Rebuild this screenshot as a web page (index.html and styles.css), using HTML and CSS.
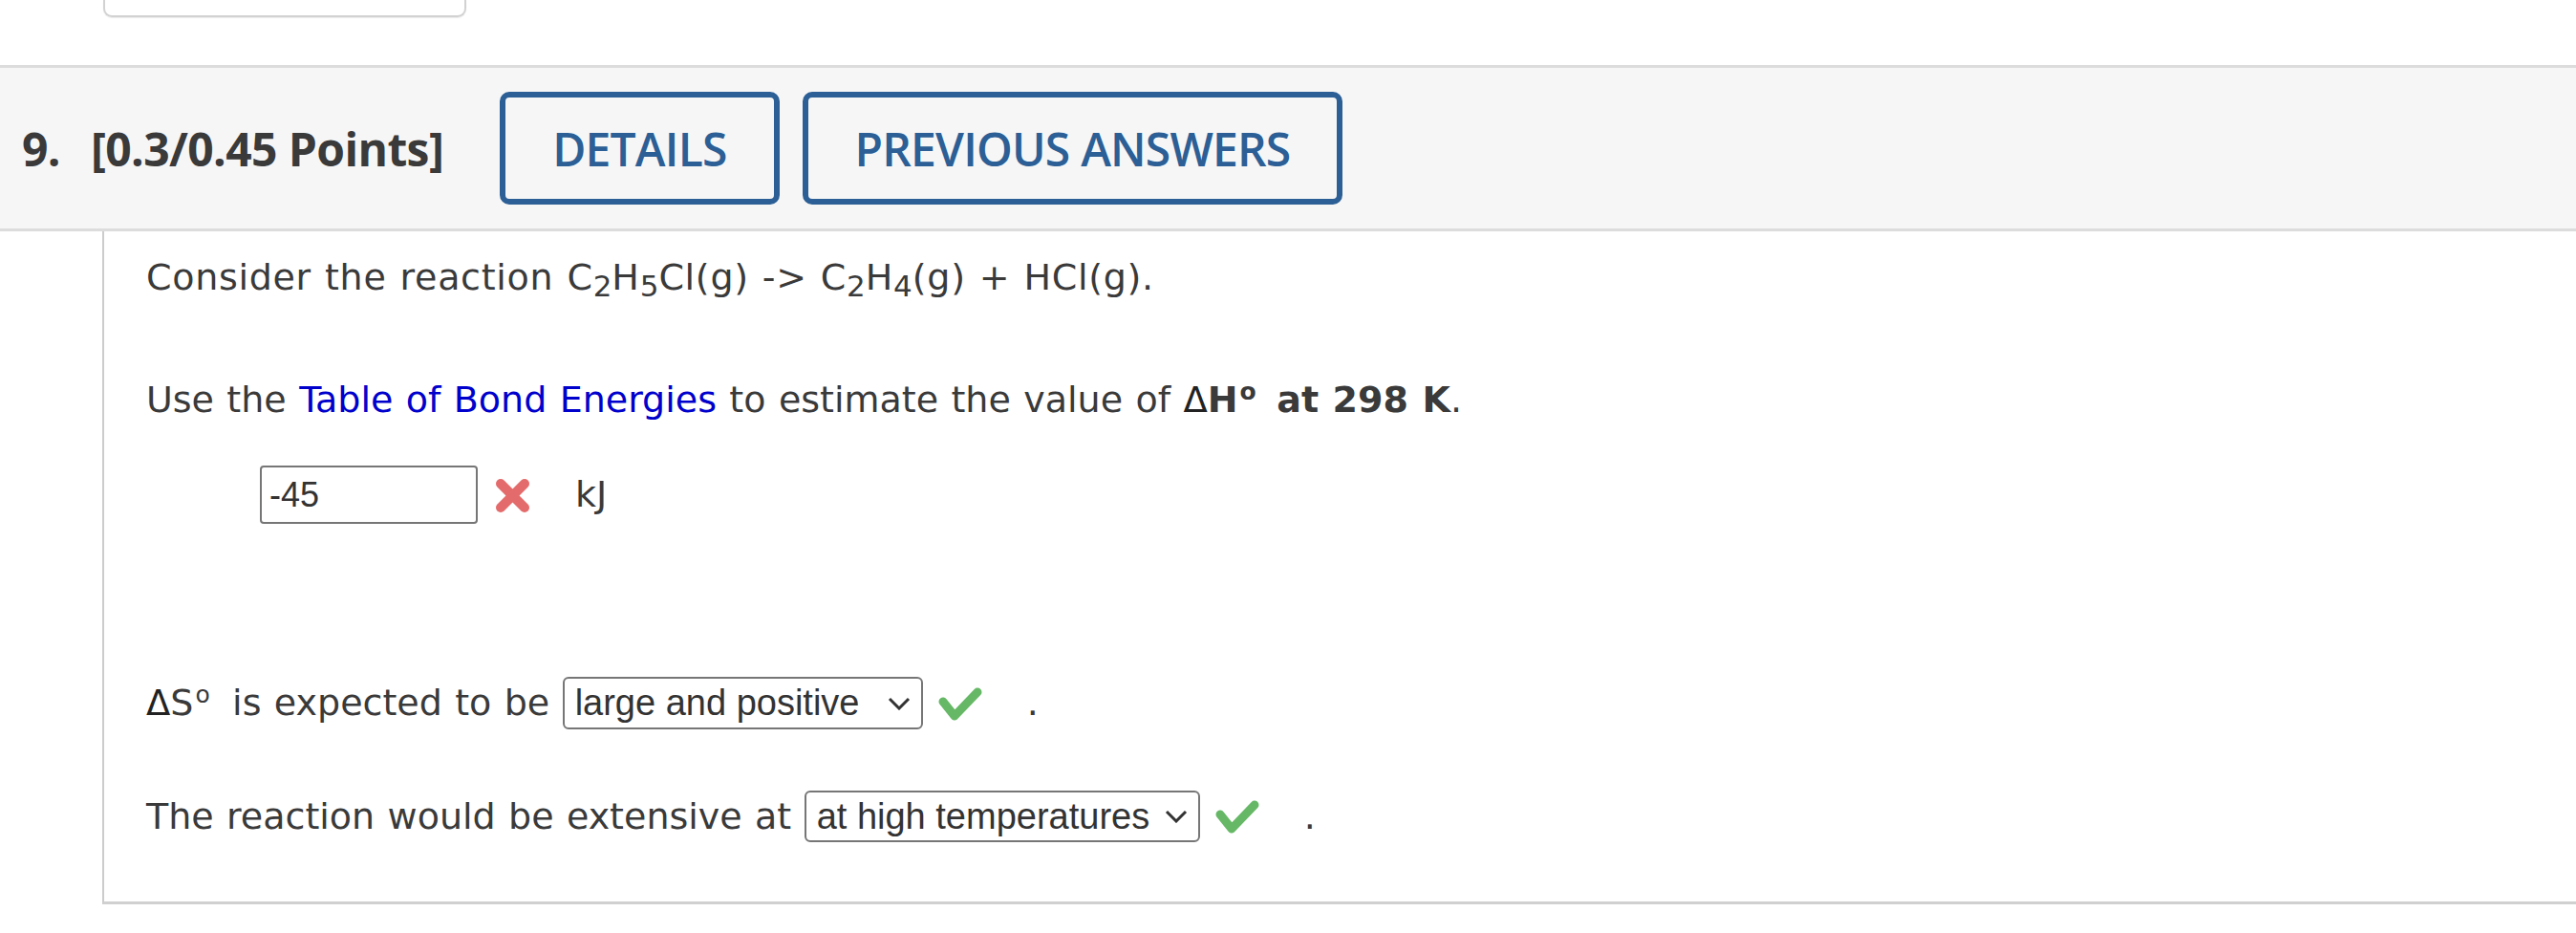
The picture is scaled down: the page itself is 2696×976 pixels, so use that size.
FILE: index.html
```html
<!DOCTYPE html>
<html>
<head>
<meta charset="utf-8">
<link rel="stylesheet" href="styles.css">
</head>
<body>
<div class="prev-card"></div>
<div class="q-header">
  <div class="q-title"><span class="q-num">9.</span><span>[0.3/0.45 Points]</span></div>
  <div class="q-btn">DETAILS</div>
  <div class="q-btn">PREVIOUS ANSWERS</div>
</div>
<div class="q-body">
  <div class="line l1">Consider the reaction C<sub>2</sub>H<sub>5</sub>Cl(g) -&gt; C<sub>2</sub>H<sub>4</sub>(g) + HCl(g).</div>
  <div class="line l2">Use the <a class="link">Table of Bond Energies</a> to estimate the value of <b><span class="delta">Δ</span>H<sup class="deg">o</sup> at 298 K</b>.</div>
  <div class="row r3">
    <span class="input">-45</span>
    <svg class="xicon" width="41" height="40" viewBox="0 0 41 40"><g stroke="#e25b5b" stroke-width="10" stroke-linecap="round" opacity="0.9"><line x1="8" y1="8" x2="33" y2="33"/><line x1="33" y1="8" x2="8" y2="33"/></g></svg>
    <span class="unit">kJ</span>
  </div>
  <div class="row r4">
    <span><span class="delta">Δ</span>S<sup class="deg">o</sup> is expected to be&nbsp;</span>
    <span class="select s1"><span>large and positive</span><svg class="chev" width="24" height="14" viewBox="0 0 24 14"><polyline points="2,2 12,12 22,2" fill="none" stroke="#333" stroke-width="3"/></svg></span>
    <svg class="check" width="48" height="36" viewBox="0 0 48 36"><polyline points="6,16 18,31 42,6" fill="none" stroke="#66b866" stroke-width="9" stroke-linecap="round" stroke-linejoin="round"/></svg>
    <span class="dot">.</span>
  </div>
  <div class="row r5">
    <span>The reaction would be extensive at&nbsp;</span>
    <span class="select s2"><span>at high temperatures</span><svg class="chev" width="24" height="14" viewBox="0 0 24 14"><polyline points="2,2 12,12 22,2" fill="none" stroke="#333" stroke-width="3"/></svg></span>
    <svg class="check" width="48" height="36" viewBox="0 0 48 36"><polyline points="6,16 18,31 42,6" fill="none" stroke="#66b866" stroke-width="9" stroke-linecap="round" stroke-linejoin="round"/></svg>
    <span class="dot">.</span>
  </div>
</div>
</body>
</html>
```
FILE: styles.css
```css
html, body {
  margin: 0;
  padding: 0;
  background: #ffffff;
}
body {
  width: 2696px;
  height: 976px;
  overflow: hidden;
  font-family: "DejaVu Sans", Verdana, sans-serif;
  color: #3a3a3a;
}
.prev-card {
  margin-left: 108px;
  width: 376px;
  height: 16px;
  border: 2px solid #d2d2d2;
  border-top: none;
  border-radius: 0 0 9px 9px;
  box-shadow: 0 1px 1px rgba(0,0,0,0.08);
}
.q-header {
  margin-top: 50px;
  height: 168px;
  background: #f6f6f6;
  border-top: 3px solid #dcdcdc;
  border-bottom: 3px solid #dcdcdc;
  display: flex;
  align-items: center;
  padding-left: 23px;
  gap: 25px;
  font-family: "Open Sans", sans-serif;
}
.q-title {
  font-weight: 700;
  font-size: 48px;
  color: #3a3a3a;
  display: flex;
  letter-spacing: -0.6px;
  margin-right: 34px;
}
.q-num {
  margin-right: 32px;
}
.q-btn {
  box-sizing: border-box;
  height: 118px;
  border: 6px solid #2c5f95;
  border-radius: 10px;
  display: flex;
  align-items: center;
  justify-content: center;
  padding: 0 49px;
  font-size: 48px;
  font-weight: 600;
  color: #2c5f95;
  letter-spacing: -0.8px;
}
.q-btn + .q-btn {
  margin-left: -1px;
}
.q-body {
  margin-left: 107px;
  border-left: 2px solid #cccccc;
  border-bottom: 3px solid #d0d0d0;
  padding: 27px 0 62px 44px;
  font-size: 38px;
  line-height: 43px;
  word-spacing: 1.3px;
}
.l1 {
  letter-spacing: 0.7px;
}
.line sub {
  font-size: 31px;
  vertical-align: -7px;
  line-height: 0;
  letter-spacing: 0;
}
.l2 {
  margin-top: 85px;
}
.link {
  color: #0000cc;
}
.delta {
  font-size: 37px;
  font-weight: 400;
  color: #222;
}
.deg {
  font-size: 25px;
  vertical-align: 13px;
  line-height: 0;
  margin: 0 7px 0 2px;
}
.r4 .deg {
  margin-right: 10px;
}
.row {
  display: flex;
  align-items: center;
}
.r3 {
  margin-top: 47px;
  height: 61px;
}
.r4 {
  margin-top: 160px;
  height: 55px;
}
.r5 {
  margin-top: 64px;
  height: 54px;
}
.input {
  box-sizing: border-box;
  margin-left: 119px;
  width: 228px;
  height: 61px;
  border: 2px solid #767676;
  border-radius: 4px;
  font-family: "Liberation Sans", Arial, sans-serif;
  font-size: 36px;
  word-spacing: 0;
  color: #333;
  display: flex;
  align-items: center;
  padding-left: 8px;
}
.xicon {
  margin-left: 16px;
  filter: blur(0.7px);
}
.unit {
  margin-left: 45px;
}
.select {
  box-sizing: border-box;
  border: 2px solid #767676;
  border-radius: 6px;
  display: flex;
  align-items: center;
  justify-content: space-between;
  padding: 0 11px 0 11px;
  font-family: "Liberation Sans", Arial, sans-serif;
  font-size: 38px;
  word-spacing: 0;
  color: #333;
}
.s1 {
  width: 377px;
  height: 55px;
}
.s2 {
  width: 414px;
  height: 54px;
}
.check {
  margin-left: 15px;
  filter: blur(0.5px);
}
.r4 .dot {
  margin-left: 46px;
}
.r5 .dot {
  margin-left: 46px;
}
```
